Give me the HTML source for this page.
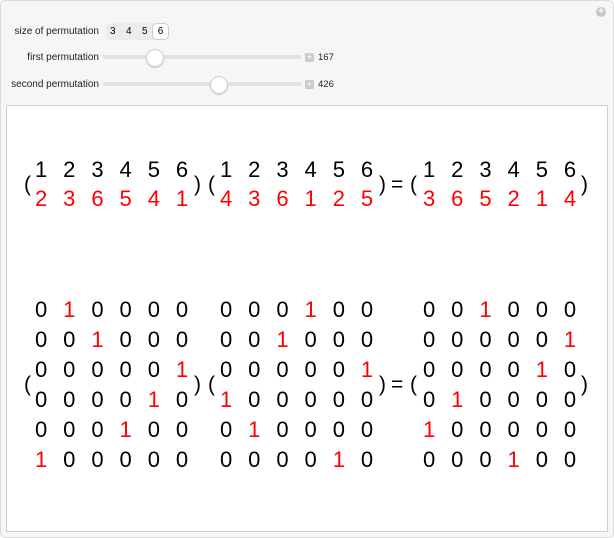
<!DOCTYPE html>
<html><head><style>
body{margin:0;width:614px;height:538px;background:#fff;font-family:"Liberation Sans",sans-serif;position:relative;overflow:hidden}
.panel{position:absolute;left:0;top:0;width:612px;height:536px;background:#f6f6f6;border:1px solid #dcdcdc;border-radius:5px}
.lbl{position:absolute;font-size:10px;color:#222;text-align:right;width:99px;left:0}
.track{position:absolute;left:103px;width:199px;height:4px;background:#e2e2e2;border-radius:2px}
.thumb{position:absolute;width:16px;height:16px;border-radius:50%;background:#fff;border:1px solid #cfcfcf;box-shadow:0 1px 1px rgba(0,0,0,.15)}
.plus{position:absolute;left:305px;width:9px;height:9px;background:#ccc;border-radius:1px;color:#fff;font-size:9px;line-height:9px;text-align:center}
.val{position:absolute;left:318px;font-size:9.5px;color:#222}
.box{position:absolute;left:6px;top:105px;width:600px;height:425px;background:#fff;border:1px solid #cfcfcf}
.g{position:absolute;display:grid;grid-template-columns:repeat(6,28.2px);font-size:22px;text-align:center}
.g span{display:block}
.r{color:#f00}
.p{position:absolute;font-size:21px}
</style></head><body>
<div class="panel"></div>
<div style="position:absolute;left:596px;top:7px;width:10px;height:10px;border-radius:50%;background:#c8c8c8;color:#fff;font-size:10px;line-height:10px;text-align:center;font-weight:bold">+</div>
<div class="lbl" style="top:26px">size of permutation</div>
<div style="position:absolute;left:105px;top:23px;width:63px;height:17px;background:#ececec;border-radius:5px;font-size:10px;"><span style="position:absolute;left:5px;top:3px">3</span><span style="position:absolute;left:21px;top:3px">4</span><span style="position:absolute;left:37px;top:3px">5</span><div style="position:absolute;left:47px;top:0;width:15px;height:15px;background:#fff;border:1px solid #ccc;border-radius:5px;text-align:center;line-height:15px">6</div></div>
<div class="lbl" style="top:52px">first permutation</div>
<div class="track" style="top:55px"></div><div class="thumb" style="left:146px;top:49px"></div>
<div class="plus" style="top:53px">+</div><div class="val" style="top:52px">167</div>
<div class="lbl" style="top:79px">second permutation</div>
<div class="track" style="top:82px"></div><div class="thumb" style="left:210px;top:76px"></div>
<div class="plus" style="top:80px">+</div><div class="val" style="top:79px">426</div>
<div class="box"></div>

<div class="g" style="left:27px;top:157px;grid-auto-rows:29px"><span>1</span><span>2</span><span>3</span><span>4</span><span>5</span><span>6</span><span class="r">2</span><span class="r">3</span><span class="r">6</span><span class="r">5</span><span class="r">4</span><span class="r">1</span></div>
<div class="g" style="left:212px;top:157px;grid-auto-rows:29px"><span>1</span><span>2</span><span>3</span><span>4</span><span>5</span><span>6</span><span class="r">4</span><span class="r">3</span><span class="r">6</span><span class="r">1</span><span class="r">2</span><span class="r">5</span></div>
<div class="g" style="left:415px;top:157px;grid-auto-rows:29px"><span>1</span><span>2</span><span>3</span><span>4</span><span>5</span><span>6</span><span class="r">3</span><span class="r">6</span><span class="r">5</span><span class="r">2</span><span class="r">1</span><span class="r">4</span></div>
<div class="p" style="left:24px;top:173px">(</div><div class="p" style="left:194px;top:173px">)</div>
<div class="p" style="left:208px;top:173px">(</div><div class="p" style="left:379px;top:173px">)</div>
<div class="p" style="left:391px;top:173px">=</div>
<div class="p" style="left:410px;top:173px">(</div><div class="p" style="left:581px;top:173px">)</div>

<div class="g" style="left:27px;top:297px;grid-auto-rows:30px">
<span>0</span><span class="r">1</span><span>0</span><span>0</span><span>0</span><span>0</span>
<span>0</span><span>0</span><span class="r">1</span><span>0</span><span>0</span><span>0</span>
<span>0</span><span>0</span><span>0</span><span>0</span><span>0</span><span class="r">1</span>
<span>0</span><span>0</span><span>0</span><span>0</span><span class="r">1</span><span>0</span>
<span>0</span><span>0</span><span>0</span><span class="r">1</span><span>0</span><span>0</span>
<span class="r">1</span><span>0</span><span>0</span><span>0</span><span>0</span><span>0</span></div>
<div class="g" style="left:212px;top:297px;grid-auto-rows:30px">
<span>0</span><span>0</span><span>0</span><span class="r">1</span><span>0</span><span>0</span>
<span>0</span><span>0</span><span class="r">1</span><span>0</span><span>0</span><span>0</span>
<span>0</span><span>0</span><span>0</span><span>0</span><span>0</span><span class="r">1</span>
<span class="r">1</span><span>0</span><span>0</span><span>0</span><span>0</span><span>0</span>
<span>0</span><span class="r">1</span><span>0</span><span>0</span><span>0</span><span>0</span>
<span>0</span><span>0</span><span>0</span><span>0</span><span class="r">1</span><span>0</span></div>
<div class="g" style="left:415px;top:297px;grid-auto-rows:30px">
<span>0</span><span>0</span><span class="r">1</span><span>0</span><span>0</span><span>0</span>
<span>0</span><span>0</span><span>0</span><span>0</span><span>0</span><span class="r">1</span>
<span>0</span><span>0</span><span>0</span><span>0</span><span class="r">1</span><span>0</span>
<span>0</span><span class="r">1</span><span>0</span><span>0</span><span>0</span><span>0</span>
<span class="r">1</span><span>0</span><span>0</span><span>0</span><span>0</span><span>0</span>
<span>0</span><span>0</span><span>0</span><span class="r">1</span><span>0</span><span>0</span></div>
<div class="p" style="left:24px;top:373px">(</div><div class="p" style="left:194px;top:373px">)</div>
<div class="p" style="left:208px;top:373px">(</div><div class="p" style="left:379px;top:373px">)</div>
<div class="p" style="left:391px;top:373px">=</div>
<div class="p" style="left:410px;top:373px">(</div><div class="p" style="left:581px;top:373px">)</div>
</body></html>
